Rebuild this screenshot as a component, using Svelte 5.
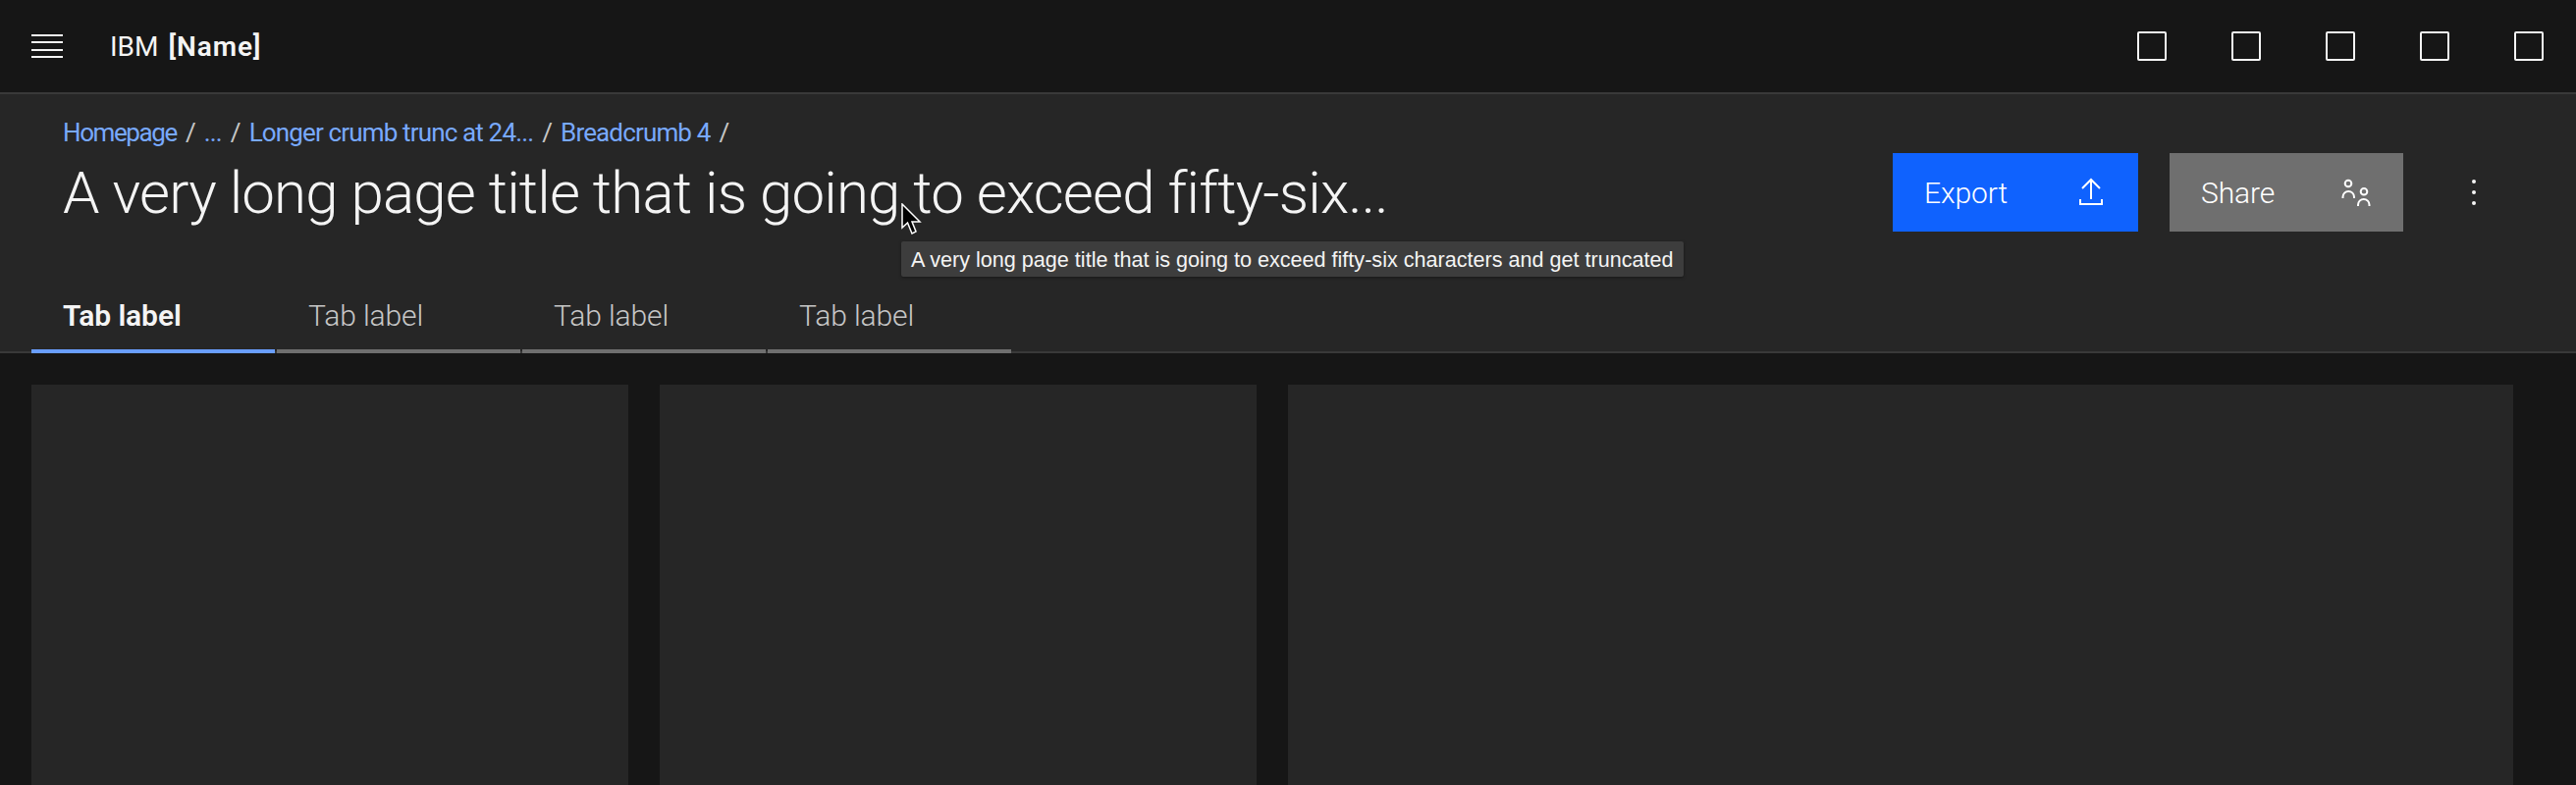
<script>
  const actions = [0, 1, 2, 3, 4];
  const tabs = ["Tab label", "Tab label", "Tab label", "Tab label"];
</script>

<div class="page">
  <header class="topbar">
    <button class="menu" aria-label="Menu">
      <span></span><span></span><span></span><span></span>
    </button>
    <div class="brand">IBM <strong>[Name]</strong></div>
    <div class="actions">
      {#each actions as a (a)}
        <div class="action"><i></i></div>
      {/each}
    </div>
  </header>

  <section class="pagehead">
    <nav class="crumbs">
      <a href="#a">Homepage</a><span class="sep">/</span>
      <a href="#b">...</a><span class="sep">/</span>
      <a href="#c">Longer crumb trunc at 24...</a><span class="sep">/</span>
      <a href="#d">Breadcrumb 4</a><span class="sep">/</span>
    </nav>
    <div class="titlerow">
      <h1>A very long page title that is going to exceed fifty-six...</h1>
      <div class="buttons">
        <button class="btn export">
          Export
          <svg width="32" height="32" viewBox="0 0 32 32" fill="none" stroke="#fff" stroke-width="2">
            <path d="M16 3V23M7 12L16 3L25 12M5 23V28H27V23" />
          </svg>
        </button>
        <button class="btn share">
          Share
          <svg width="32" height="32" viewBox="0 0 32 32" fill="none" stroke="#fff" stroke-width="2">
            <circle cx="8" cy="7" r="3.300" />
            <path d="M2.500 22V20.700A5.700 5.700 0 0 1 14 20.700V22" />
            <circle cx="24" cy="15.300" r="3.300" />
            <path d="M18 30V28.700A5.700 5.700 0 0 1 29.500 28.700V30" />
          </svg>
        </button>
        <div class="kebab"><i></i><i></i><i></i></div>
      </div>
    </div>
    <div class="tabs">
      {#each tabs as t, i}
        <div class="tab" class:active={i === 0}>{t}</div>
      {/each}
    </div>
  </section>

  <main class="cards">
    <div class="card"></div>
    <div class="card"></div>
    <div class="card wide"></div>
  </main>

  <div class="tooltip">A very long page title that is going to exceed fifty-six characters and get truncated</div>
  <svg class="cursor" width="22" height="34" viewBox="0 0 22 34">
    <path d="M1 1V25L6.500 20L11 31L15 29L11 19H19Z" fill="#000" stroke="#fff" stroke-width="1.500" />
  </svg>
</div>

<style>
  :global(body) {
    margin: 0;
    background: #161616;
  }

  .page {
    position: relative;
    height: 100vh;
    overflow: hidden;
    background: #161616;
    color: #f4f4f4;
    font-family: Roboto, "Liberation Sans", sans-serif;
  }

  .topbar {
    display: flex;
    align-items: center;
    height: 94px;
    border-bottom: 2px solid #393939;
    background: #161616;
  }

  .menu {
    display: flex;
    flex-direction: column;
    justify-content: space-between;
    width: 32px;
    height: 24px;
    margin-left: 32px;
    padding: 0;
    border: 0;
    background: none;
  }

  .menu span {
    display: block;
    height: 2px;
    background: #f4f4f4;
  }

  .brand {
    margin-left: 48px;
    font-size: 28px;
    font-weight: 400;
    word-spacing: 3px;
    color: #f4f4f4;
  }

  .brand strong {
    font-weight: 600;
    letter-spacing: 0.9px;
  }

  .actions {
    display: flex;
    margin-left: auto;
  }

  .action {
    display: flex;
    align-items: center;
    justify-content: center;
    width: 96px;
    height: 94px;
  }

  .action i {
    display: block;
    box-sizing: border-box;
    width: 30px;
    height: 30px;
    border: 2px solid #f4f4f4;
    border-radius: 2px;
  }

  .pagehead {
    height: 264px;
    box-sizing: border-box;
    border-bottom: 2px solid #393939;
    background: #262626;
  }

  .crumbs {
    display: flex;
    align-items: center;
    height: 36px;
    padding: 21px 0 1px 64px;
    font-size: 26px;
    font-weight: 400;
    letter-spacing: -0.85px;
  }

  .crumbs a {
    color: #78a9ff;
    text-decoration: none;
  }

  .crumbs a:first-child {
    letter-spacing: -1.4px;
  }

  .sep {
    margin: 0 9px;
    color: #c6c6c6;
  }

  .titlerow {
    display: flex;
    align-items: center;
    justify-content: space-between;
    height: 80px;
    padding: 2px 56px 0 64px;
  }

  h1 {
    margin: 0;
    font-size: 60px;
    font-weight: 300;
    letter-spacing: -0.84px;
    color: #f4f4f4;
    white-space: nowrap;
  }

  .buttons {
    display: flex;
    align-items: center;
  }

  .btn {
    display: flex;
    align-items: center;
    justify-content: space-between;
    box-sizing: border-box;
    height: 80px;
    padding: 0 32px;
    border: 0;
    color: #fff;
    font: inherit;
    font-size: 30px;
    font-weight: 300;
    letter-spacing: -0.1px;
  }

  .export {
    width: 250px;
    background: #0f62fe;
  }

  .share {
    width: 238px;
    margin-left: 32px;
    background: #6f6f6f;
  }

  .kebab {
    display: flex;
    flex-direction: column;
    align-items: center;
    gap: 7px;
    width: 96px;
    margin-left: 24px;
  }

  .kebab i {
    display: block;
    width: 4px;
    height: 4px;
    border-radius: 50%;
    background: #f4f4f4;
  }

  .tabs {
    display: flex;
    gap: 2px;
    margin-top: 44px;
    padding-left: 32px;
  }

  .tab {
    box-sizing: border-box;
    width: 248px;
    height: 80px;
    padding: 24px 0 0 32px;
    border-bottom: 4px solid #6f6f6f;
    font-size: 30px;
    font-weight: 300;
    letter-spacing: -0.1px;
    color: #c6c6c6;
  }

  .tab.active {
    border-bottom-color: #699eff;
    font-weight: 600;
    color: #f4f4f4;
  }

  .cards {
    display: grid;
    grid-template-columns: repeat(4, 1fr);
    gap: 32px;
    padding: 32px 64px 0 32px;
  }

  .card {
    height: 640px;
    background: #262626;
  }

  .wide {
    grid-column: span 2;
  }

  .tooltip {
    position: absolute;
    top: 246px;
    left: 918px;
    box-sizing: border-box;
    height: 36px;
    padding: 0 10px;
    border-radius: 2px;
    background: #3d3d3d;
    box-shadow: 0 1px 3px rgba(0, 0, 0, 0.4);
    color: #f4f4f4;
    font-family: "Liberation Sans", Arial, sans-serif;
    font-size: 21.6px;
    line-height: 38px;
    white-space: nowrap;
  }

  .cursor {
    position: absolute;
    top: 207px;
    left: 918px;
  }
</style>
